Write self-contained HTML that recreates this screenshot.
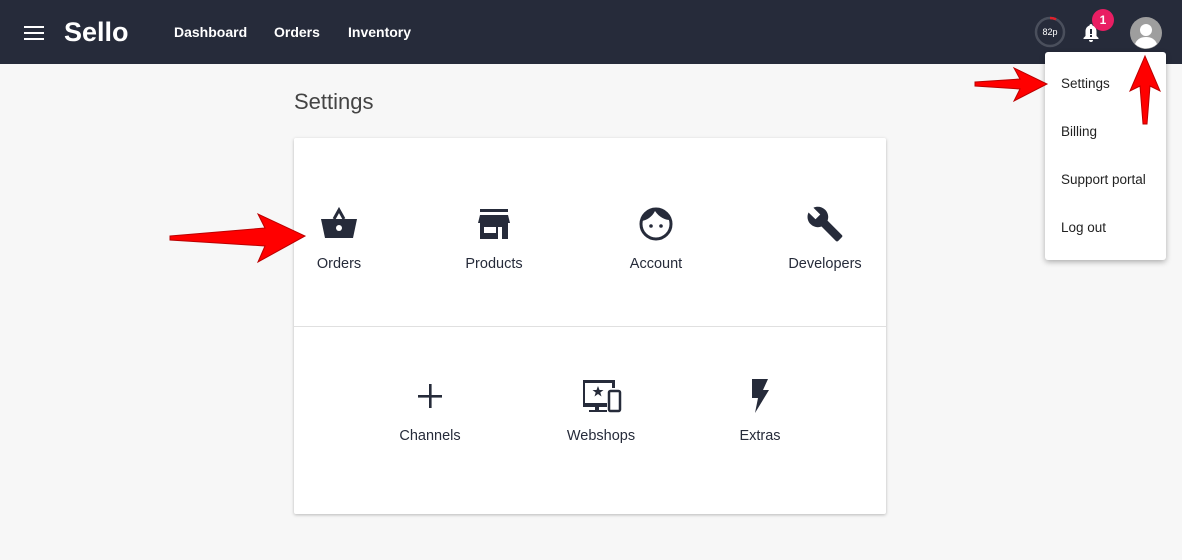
<!DOCTYPE html>
<html><head><style>
body{margin:0;width:1182px;height:560px;background:#f7f7f7;font-family:"Liberation Sans",Arial,sans-serif;position:relative;overflow:hidden}
.hdr{position:absolute;left:0;top:0;width:1182px;height:64px;background:#262b3a}
.a{position:absolute;white-space:nowrap}
.nav{color:#fff;font-size:14px;font-weight:bold;top:24px}
.card{position:absolute;left:294px;top:138px;width:592px;height:376px;background:#fff;box-shadow:0 1px 3px rgba(0,0,0,.25);border-radius:2px}
.lbl{position:absolute;font-size:14.5px;color:#262b3a;transform:translateX(-50%);top:118px}
.ic{position:absolute;transform:translate(-50%,-50%)}
.menu{position:absolute;left:1045px;top:52px;width:121px;height:208px;background:#fff;border-radius:3px;box-shadow:0 2px 6px rgba(0,0,0,.3)}
.mi{position:absolute;left:16px;font-size:13.5px;color:#222}
</style></head><body>
<div class="hdr"></div>
<svg class="a" style="left:24px;top:26px" width="20" height="14"><rect y="0" width="20" height="2" fill="#fff"/><rect y="6" width="20" height="2" fill="#fff"/><rect y="12" width="20" height="2" fill="#fff"/></svg>
<div class="a" style="left:64px;top:17px;color:#fff;font-size:27px;font-weight:bold">Sello</div>
<div class="a nav" style="left:174px">Dashboard</div>
<div class="a nav" style="left:274px">Orders</div>
<div class="a nav" style="left:348px">Inventory</div>
<svg class="a" style="left:1034px;top:16px" width="32" height="32"><circle cx="16" cy="16" r="14" fill="none" stroke="#4a4f5c" stroke-width="2.5"/><path d="M16 2 A14 14 0 0 1 22 3.3" fill="none" stroke="#e0202b" stroke-width="2.5"/><text x="16" y="19" font-size="9" fill="#fff" text-anchor="middle" font-family="Liberation Sans">82p</text></svg>
<svg class="a" style="left:1082px;top:23px" width="18" height="20"><path d="M9 1c1 0 1.5.7 1.5 1.5C13 3.3 14.5 5.5 14.5 8.5V13l2 2v1H1.5v-1l2-2V8.5C3.5 5.5 5 3.3 7.5 2.5 7.5 1.7 8 1 9 1zM7 17h4a2 2 0 0 1-4 0z" fill="#fff"/><rect x="8" y="6" width="2" height="5" fill="#262b3a"/><rect x="8" y="12" width="2" height="2" fill="#262b3a"/></svg>
<div class="a" style="left:1092px;top:9px;width:22px;height:22px;border-radius:50%;background:#e91e63;color:#fff;font-size:12px;font-weight:bold;text-align:center;line-height:22px">1</div>
<svg class="a" style="left:1130px;top:17px" width="32" height="32"><circle cx="16" cy="16" r="16" fill="#9e9e9e"/><circle cx="16" cy="13" r="6" fill="#fff"/><path d="M5 27c2-5 6-7 11-7s9 2 11 7a16 16 0 0 1-22 0z" fill="#fff"/></svg>
<div class="a" style="left:294px;top:89px;font-size:22px;color:#444">Settings</div>
<div class="card">
<div style="position:absolute;left:0;top:188px;width:592px;height:1px;background:#e0e0e0"></div>
<svg class="ic" style="left:45px;top:86px" width="38" height="34" viewBox="0 0 38 34"><path d="M14 12L19 3l5 9" fill="none" stroke="#262b3a" stroke-width="3"/><path d="M1 12h36l-4 19H5z" fill="#262b3a"/><circle cx="19" cy="21" r="3" fill="#fff"/></svg>
<div class="lbl" style="left:45px">Orders</div>
<svg class="ic" style="left:200px;top:86px" width="32" height="32" viewBox="0 0 32 32"><rect x="2" y="1" width="28" height="3" fill="#262b3a"/><path d="M2 7h28l2 8H0z" fill="#262b3a"/><rect x="2" y="15" width="28" height="16" fill="#262b3a"/><rect x="6" y="19" width="12" height="6" fill="#fff"/><rect x="20" y="19" width="4" height="12" fill="#fff"/></svg>
<div class="lbl" style="left:200px">Products</div>
<svg class="ic" style="left:362px;top:86px" width="34" height="34" viewBox="0 0 34 34"><circle cx="17" cy="17" r="15" fill="none" stroke="#262b3a" stroke-width="3"/><path d="M3 14C8 13 13 10 16 4 20 10 26 13 31 13 30 6 24 2 17 2 9 2 4 7 3 14z" fill="#262b3a"/><circle cx="12" cy="19" r="1.8" fill="#262b3a"/><circle cx="22" cy="19" r="1.8" fill="#262b3a"/></svg>
<div class="lbl" style="left:362px">Account</div>
<svg class="ic" style="left:531px;top:86px" width="38" height="38" viewBox="0 0 24 24"><path d="M22.7 19l-9.1-9.1c.9-2.3.4-5-1.5-6.9-2-2-5-2.4-7.4-1.3L9 6 6 9 1.6 4.7C.4 7.1.9 10.1 2.9 12.1c1.9 1.9 4.6 2.4 6.9 1.5l9.1 9.1c.4.4 1 .4 1.4 0l2.3-2.3c.5-.4.5-1.1.1-1.4z" fill="#262b3a"/></svg>
<div class="lbl" style="left:531px">Developers</div>
<svg class="ic" style="left:136px;top:258px" width="26" height="26"><rect x="12" y="1" width="2.6" height="24" fill="#262b3a"/><rect x="1" y="12" width="24" height="2.6" fill="#262b3a"/></svg>
<div class="lbl" style="left:136px;top:290px">Channels</div>
<svg class="ic" style="left:307px;top:258px" width="42" height="34" viewBox="0 0 42 34"><path d="M3 1h32v8h-3V4H5v20h22v4h-8v3h8v2H9v-2h6v-3H3z" fill="#262b3a"/><rect x="29" y="12" width="11" height="20" rx="1.5" fill="none" stroke="#262b3a" stroke-width="2.5"/><path d="M18 7l1.5 4h4l-3.2 2.5 1.2 4-3.5-2.5-3.5 2.5 1.2-4L12.5 11h4z" fill="#262b3a"/></svg>
<div class="lbl" style="left:307px;top:290px">Webshops</div>
<svg class="ic" style="left:466px;top:258px" width="20" height="36" viewBox="0 0 20 36"><path d="M2 1h16l-5 11h6L5 35l3-15H2z" fill="#262b3a"/></svg>
<div class="lbl" style="left:466px;top:290px">Extras</div>
</div>
<div class="menu">
<div class="mi" style="top:24px">Settings</div>
<div class="mi" style="top:72px">Billing</div>
<div class="mi" style="top:120px">Support portal</div>
<div class="mi" style="top:168px">Log out</div>
</div>
<svg class="a" style="left:0;top:0" width="1182" height="560"><g fill="#f00" stroke="#b00" stroke-width="1"><path d="M170 236L265 228 258 214 305 236 258 262 265 246 170 240z"/><path d="M975 82L1020 79 1014 68 1047 84 1014 101 1020 89 975 86z"/><path d="M1143 124L1140 86 1130 91 1145 56 1160 91 1150 86 1147 124z"/></g></svg>
</body></html>
